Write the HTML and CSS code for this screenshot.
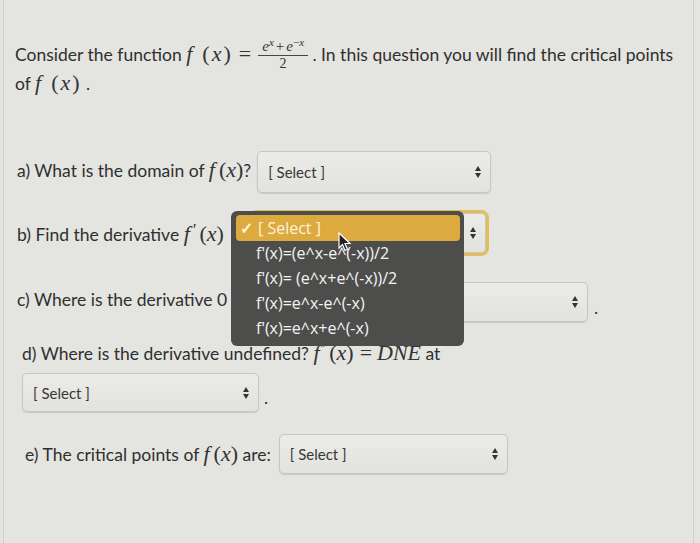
FILE: index.html
```html
<!DOCTYPE html>
<html>
<head>
<meta charset="utf-8">
<link rel="stylesheet" href="styles.css">
</head>
<body>
<div class="question">
  <p class="intro"><span>Consider the function </span><span class="m wide"><i>f</i><span class="gap"></span>(<i>x</i>)<span class="eq">=</span></span><span class="frac"><span class="num"><i>e</i><sup><i>x</i></sup><span class="plus">+</span><i>e</i><sup>&minus;<i>x</i></sup></span><span class="den">2</span></span><span> . In this question you will find the critical points </span><span>of </span><span class="m wide"><i>f</i><span class="gap"></span>(<i>x</i>)</span><span> .</span></p>

  <div class="row row-a">
    <span class="label">a) What is the domain of <span class="m"><i>f</i><span class="gap sm"></span>(<i>x</i>)</span>?</span>
    <div class="select"><span>[ Select ]</span><span class="arrows"></span></div>
  </div>

  <div class="row row-b">
    <span class="label">b) Find the derivative <span class="m"><i>f</i><span class="prime">'</span><span class="gap sm"></span>(<i>x</i>)</span></span>
    <div class="select focused"><span></span><span class="arrows"></span></div>
  </div>

  <div class="row row-c">
    <span class="label">c) Where is the derivative 0</span>
    <div class="select"><span></span><span class="arrows"></span></div>
    <span class="dot">.</span>
  </div>

  <p class="label row-d">d) Where is the derivative undefined? <span class="m"><i>f</i><span class="prime">'</span><span class="gap sm"></span>(<i>x</i>)<span class="eq">=</span><i>DNE</i></span> at</p>
  <div class="row row-d2">
    <div class="select"><span>[ Select ]</span><span class="arrows"></span></div>
    <span class="dot">.</span>
  </div>

  <div class="row row-e">
    <span class="label">e) The critical points of <span class="m"><i>f</i><span class="gap sm"></span>(<i>x</i>)</span> are:</span>
    <div class="select"><span>[ Select ]</span><span class="arrows"></span></div>
  </div>

  <ul class="menu">
    <li class="sel"><span class="check">&#10003;</span>[ Select ]</li>
    <li>f'(x)=(e^x-e^(-x))/2</li>
    <li>f'(x)= (e^x+e^(-x))/2</li>
    <li>f'(x)=e^x-e^(-x)</li>
    <li>f'(x)=e^x+e^(-x)</li>
  </ul>
  <svg class="cursor" width="14" height="20" viewBox="0 0 14 20"><path d="M1 1 L1 16 L4.5 12.5 L7 18.5 L9.5 17.5 L7 11.5 L12 11.5 Z" fill="#222" stroke="#fff" stroke-width="1.2"/></svg>
</div>
</body>
</html>
```
FILE: styles.css
```css
html, body {
  margin: 0;
  padding: 0;
  background: #e4e4e0;
}
body {
  font-family: Lato, "Open Sans", sans-serif;
  color: #2f2f2f;
  font-size: 17.5px;
}
.question {
  position: relative;
  margin: 0 6px 0 3px;
  height: 543px;
  border-left: 1px solid #cfcfcb;
  border-right: 1px solid #cfcfcb;
  padding: 40px 0 0 11px;
  box-sizing: border-box;
}
.intro {
  margin: 0;
  line-height: 27px;
  width: 664px;
}
.m {
  font-family: "Liberation Serif", "DejaVu Serif", serif;
  font-size: 22px;
  line-height: 20px;
  white-space: nowrap;
  color: #333;
}
.m.wide { letter-spacing: 2px; }
.m i { font-style: italic; }
.gap { display: inline-block; width: 8px; }
.gap.sm { width: 4px; }
.eq { display: inline-block; margin: 0 5px 0 6px; }
.prime {
  display: inline-block;
  font-family: "Liberation Serif", serif;
  font-style: italic;
  font-size: 17px;
  line-height: 10px;
  vertical-align: 6px;
  margin-left: 2px;
}
.frac {
  display: inline-block;
  vertical-align: -7px;
  text-align: center;
  font-family: "Liberation Serif", serif;
  font-size: 15px;
  line-height: 13px;
  color: #333;
}
.frac .num {
  display: block;
  border-bottom: 1px solid #444;
  padding: 0 4px 2px;
}
.frac .num i { font-style: italic; }
.frac .plus { margin: 0 2px; }
.frac sup { font-size: 11px; vertical-align: 5px; line-height: 0; }
.frac .den { display: block; padding-top: 1px; font-size: 14px; }
.row {
  display: flex;
  align-items: center;
  gap: 6px;
}
.label {
  white-space: nowrap;
}
.select {
  width: 234px;
  height: 40px;
  box-sizing: border-box;
  border: 1px solid #c6c6c2;
  border-radius: 5px;
  background: linear-gradient(#ebebe8, #e2e2df);
  box-shadow: 0 1px 1px rgba(0,0,0,0.12);
  display: flex;
  align-items: center;
  justify-content: space-between;
  padding: 0 8px 0 10px;
  font-size: 15px;
  color: #383838;
  flex-shrink: 0;
}
.arrows {
  width: 7px;
  height: 12px;
  position: relative;
}
.arrows::before, .arrows::after {
  content: "";
  position: absolute;
  left: 0;
  border-left: 3.5px solid transparent;
  border-right: 3.5px solid transparent;
}
.arrows::before { top: 0; border-bottom: 5px solid #333; }
.arrows::after { bottom: 0; border-top: 5px solid #333; }
.row-a { margin-top: 54px; }
.row-a .label { margin-bottom: 4px; margin-left: 2px; }
.row-a .select { height: 42px; width: 234px; }
.row-b { margin-top: 20px; }
.row-b .label { width: 229px; margin-top: 2px; margin-left: 2px; }
.focused { box-shadow: 0 0 0 3px #e2bd5c; }
.row-c { margin-top: 29px; }
.row-c .label { width: 331px; margin-bottom: 6px; margin-left: 2px; }
.dot { align-self: flex-end; margin-bottom: 4px; }
p.row-d { margin: 19px 0 0 7px; line-height: 26px; }
.row-d2 { margin-top: 6px; gap: 5px; }
.row-d2 .select { width: 237px; height: 39px; margin-left: 7px; }
.row-e { margin-top: 22px; gap: 8px; }
.row-e .label { margin-left: 10px; }
.row-e .select { width: 229px; }
.menu {
  position: absolute;
  left: 227px;
  top: 211px;
  width: 233px;
  margin: 0;
  padding: 4px 4px 5px 5px;
  box-sizing: border-box;
  list-style: none;
  background: #4d4d4c;
  border-radius: 6px;
  color: #f4f4f4;
  font-family: "Open Sans", "Liberation Sans", sans-serif;
  font-size: 16px;
}
.menu li {
  height: 25px;
  line-height: 25px;
  padding-left: 20px;
  white-space: nowrap;
}
.menu li.sel {
  background: #dcaa3e;
  border-radius: 4px;
  padding-left: 4px;
  height: 26px;
  line-height: 26px;
  color: #fdf3dc;
}
.check { margin-right: 5px; font-weight: 700; }
.cursor {
  position: absolute;
  left: 334px;
  top: 232px;
}
```
